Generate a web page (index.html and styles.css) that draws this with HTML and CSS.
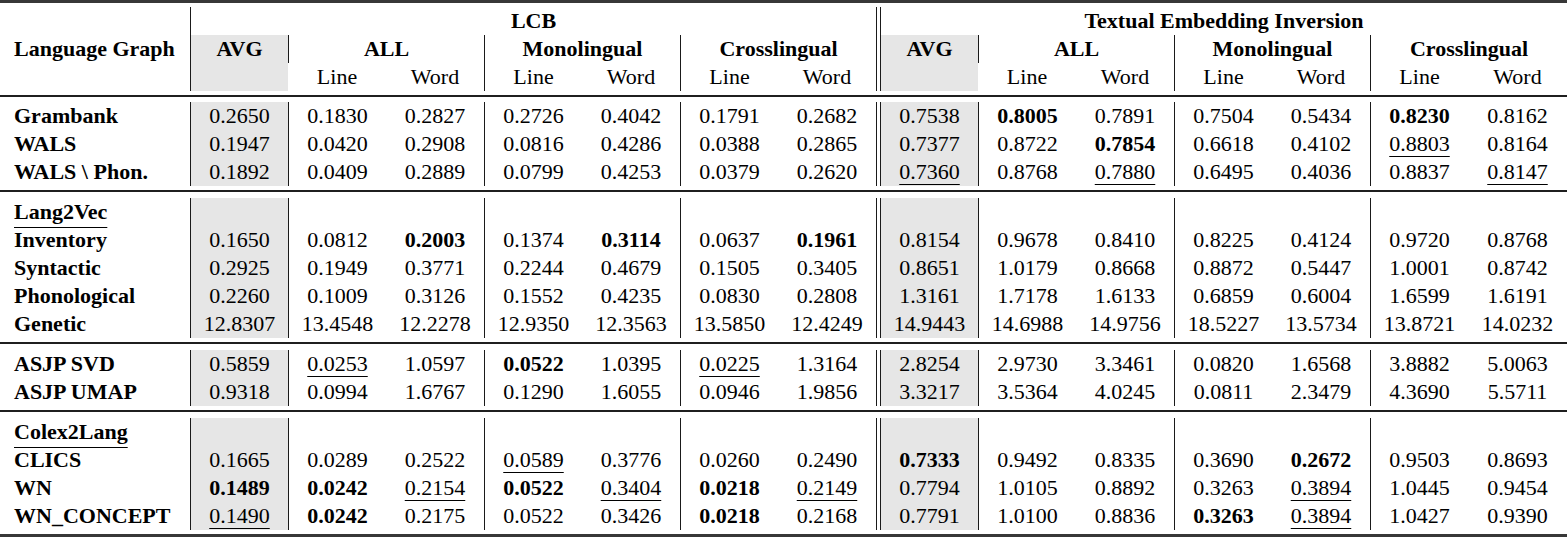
FILE: index.html
```html
<!DOCTYPE html>
<html lang="en">
<head>
<meta charset="utf-8">
<title>Language Graph results</title>
<link rel="stylesheet" href="styles.css">
</head>
<body>
<table class="results">
  <colgroup>
    <col class="c-label">
    <col class="c-num"><col class="c-num"><col class="c-num"><col class="c-num"><col class="c-num"><col class="c-num"><col class="c-num">
    <col class="c-gap">
    <col class="c-num"><col class="c-num"><col class="c-num"><col class="c-num"><col class="c-num"><col class="c-num"><col class="c-last">
  </colgroup>
  <thead>
    <tr class="toprule"><td colspan="16"></td></tr>
    <tr class="hrow">
      <th class="label corner" rowspan="3">Language Graph</th>
      <th class="v" colspan="7">LCB</th>
      <th class="v gap"></th>
      <th class="v" colspan="7">Textual Embedding Inversion</th>
    </tr>
    <tr class="hrow">
      <th class="v avg">AVG</th>
      <th class="v" colspan="2">ALL</th>
      <th class="v" colspan="2">Monolingual</th>
      <th class="v" colspan="2">Crosslingual</th>
      <th class="v gap"></th>
      <th class="v avg">AVG</th>
      <th class="v" colspan="2">ALL</th>
      <th class="v" colspan="2">Monolingual</th>
      <th class="v" colspan="2">Crosslingual</th>
    </tr>
    <tr class="hrow sub">
      <th class="v avg"></th>
      <th>Line</th><th>Word</th>
      <th class="v">Line</th><th>Word</th>
      <th class="v">Line</th><th>Word</th>
      <th class="v gap"></th>
      <th class="v avg"></th>
      <th>Line</th><th>Word</th>
      <th class="v">Line</th><th>Word</th>
      <th class="v">Line</th><th>Word</th>
    </tr>
    <tr class="midrule first"><td colspan="16"><div class="rule"></div></td></tr>
  </thead>
  <tbody>
    <tr>
      <td class="label">Grambank</td>
      <td class="v avg">0.2650</td><td class="v">0.1830</td><td>0.2827</td><td class="v">0.2726</td><td>0.4042</td><td class="v">0.1791</td><td>0.2682</td>
      <td class="v gap"></td>
      <td class="v avg">0.7538</td><td class="v b">0.8005</td><td>0.7891</td><td class="v">0.7504</td><td>0.5434</td><td class="v b">0.8230</td><td>0.8162</td>
    </tr>
    <tr>
      <td class="label">WALS</td>
      <td class="v avg">0.1947</td><td class="v">0.0420</td><td>0.2908</td><td class="v">0.0816</td><td>0.4286</td><td class="v">0.0388</td><td>0.2865</td>
      <td class="v gap"></td>
      <td class="v avg">0.7377</td><td class="v">0.8722</td><td class="b">0.7854</td><td class="v">0.6618</td><td>0.4102</td><td class="v"><span class="u">0.8803</span></td><td>0.8164</td>
    </tr>
    <tr>
      <td class="label">WALS \ Phon.</td>
      <td class="v avg">0.1892</td><td class="v">0.0409</td><td>0.2889</td><td class="v">0.0799</td><td>0.4253</td><td class="v">0.0379</td><td>0.2620</td>
      <td class="v gap"></td>
      <td class="v avg"><span class="u">0.7360</span></td><td class="v">0.8768</td><td><span class="u">0.7880</span></td><td class="v">0.6495</td><td>0.4036</td><td class="v">0.8837</td><td><span class="u">0.8147</span></td>
    </tr>
    <tr class="midrule"><td colspan="16"><div class="rule"></div></td></tr>
    <tr>
      <td class="label"><span class="u ul-label">Lang2Vec</span></td>
      <td class="v avg"></td><td class="v"></td><td></td><td class="v"></td><td></td><td class="v"></td><td></td>
      <td class="v gap"></td>
      <td class="v avg"></td><td class="v"></td><td></td><td class="v"></td><td></td><td class="v"></td><td></td>
    </tr>
    <tr>
      <td class="label">Inventory</td>
      <td class="v avg">0.1650</td><td class="v">0.0812</td><td class="b">0.2003</td><td class="v">0.1374</td><td class="b">0.3114</td><td class="v">0.0637</td><td class="b">0.1961</td>
      <td class="v gap"></td>
      <td class="v avg">0.8154</td><td class="v">0.9678</td><td>0.8410</td><td class="v">0.8225</td><td>0.4124</td><td class="v">0.9720</td><td>0.8768</td>
    </tr>
    <tr>
      <td class="label">Syntactic</td>
      <td class="v avg">0.2925</td><td class="v">0.1949</td><td>0.3771</td><td class="v">0.2244</td><td>0.4679</td><td class="v">0.1505</td><td>0.3405</td>
      <td class="v gap"></td>
      <td class="v avg">0.8651</td><td class="v">1.0179</td><td>0.8668</td><td class="v">0.8872</td><td>0.5447</td><td class="v">1.0001</td><td>0.8742</td>
    </tr>
    <tr>
      <td class="label">Phonological</td>
      <td class="v avg">0.2260</td><td class="v">0.1009</td><td>0.3126</td><td class="v">0.1552</td><td>0.4235</td><td class="v">0.0830</td><td>0.2808</td>
      <td class="v gap"></td>
      <td class="v avg">1.3161</td><td class="v">1.7178</td><td>1.6133</td><td class="v">0.6859</td><td>0.6004</td><td class="v">1.6599</td><td>1.6191</td>
    </tr>
    <tr>
      <td class="label">Genetic</td>
      <td class="v avg">12.8307</td><td class="v">13.4548</td><td>12.2278</td><td class="v">12.9350</td><td>12.3563</td><td class="v">13.5850</td><td>12.4249</td>
      <td class="v gap"></td>
      <td class="v avg">14.9443</td><td class="v">14.6988</td><td>14.9756</td><td class="v">18.5227</td><td>13.5734</td><td class="v">13.8721</td><td>14.0232</td>
    </tr>
    <tr class="midrule"><td colspan="16"><div class="rule"></div></td></tr>
    <tr>
      <td class="label">ASJP SVD</td>
      <td class="v avg">0.5859</td><td class="v"><span class="u">0.0253</span></td><td>1.0597</td><td class="v b">0.0522</td><td>1.0395</td><td class="v"><span class="u">0.0225</span></td><td>1.3164</td>
      <td class="v gap"></td>
      <td class="v avg">2.8254</td><td class="v">2.9730</td><td>3.3461</td><td class="v">0.0820</td><td>1.6568</td><td class="v">3.8882</td><td>5.0063</td>
    </tr>
    <tr>
      <td class="label">ASJP UMAP</td>
      <td class="v avg">0.9318</td><td class="v">0.0994</td><td>1.6767</td><td class="v">0.1290</td><td>1.6055</td><td class="v">0.0946</td><td>1.9856</td>
      <td class="v gap"></td>
      <td class="v avg">3.3217</td><td class="v">3.5364</td><td>4.0245</td><td class="v">0.0811</td><td>2.3479</td><td class="v">4.3690</td><td>5.5711</td>
    </tr>
    <tr class="midrule"><td colspan="16"><div class="rule"></div></td></tr>
    <tr>
      <td class="label"><span class="u ul-label">Colex2Lang</span></td>
      <td class="v avg"></td><td class="v"></td><td></td><td class="v"></td><td></td><td class="v"></td><td></td>
      <td class="v gap"></td>
      <td class="v avg"></td><td class="v"></td><td></td><td class="v"></td><td></td><td class="v"></td><td></td>
    </tr>
    <tr>
      <td class="label">CLICS</td>
      <td class="v avg">0.1665</td><td class="v">0.0289</td><td>0.2522</td><td class="v"><span class="u">0.0589</span></td><td>0.3776</td><td class="v">0.0260</td><td>0.2490</td>
      <td class="v gap"></td>
      <td class="v avg b">0.7333</td><td class="v">0.9492</td><td>0.8335</td><td class="v">0.3690</td><td class="b">0.2672</td><td class="v">0.9503</td><td>0.8693</td>
    </tr>
    <tr>
      <td class="label">WN</td>
      <td class="v avg b">0.1489</td><td class="v b">0.0242</td><td><span class="u">0.2154</span></td><td class="v b">0.0522</td><td><span class="u">0.3404</span></td><td class="v b">0.0218</td><td><span class="u">0.2149</span></td>
      <td class="v gap"></td>
      <td class="v avg">0.7794</td><td class="v">1.0105</td><td>0.8892</td><td class="v">0.3263</td><td><span class="u">0.3894</span></td><td class="v">1.0445</td><td>0.9454</td>
    </tr>
    <tr>
      <td class="label">WN_CONCEPT</td>
      <td class="v avg"><span class="u">0.1490</span></td><td class="v b">0.0242</td><td>0.2175</td><td class="v">0.0522</td><td>0.3426</td><td class="v b">0.0218</td><td>0.2168</td>
      <td class="v gap"></td>
      <td class="v avg">0.7791</td><td class="v">1.0100</td><td>0.8836</td><td class="v b">0.3263</td><td><span class="u">0.3894</span></td><td class="v">1.0427</td><td>0.9390</td>
    </tr>
    <tr class="bottomrule"><td colspan="16"></td></tr>
  </tbody>
</table>
</body>
</html>
```

FILE: styles.css
```css
html, body {
  margin: 0;
  padding: 0;
  background: #ffffff;
}

body {
  font-family: "Liberation Serif", "Times New Roman", serif;
  font-size: 22px;
  color: #000000;
}

.results {
  width: 1567px;
  table-layout: fixed;
  border-collapse: separate;
  border-spacing: 0;
}

.c-label { width: 190px; }
.c-num { width: 98px; }
.c-gap { width: 4px; }
.c-last { width: 99px; }

.results th,
.results td {
  padding: 0;
  height: 28px;
  line-height: 28px;
  text-align: center;
  vertical-align: middle;
  white-space: nowrap;
  font-weight: normal;
}

.results th {
  font-weight: bold;
}

.results .sub th {
  font-weight: normal;
}

.results .label {
  text-align: left;
  padding-left: 14px;
  font-weight: bold;
}

.results .corner {
  height: auto;
}

.results .v {
  border-left: 1px solid #1a1a1a;
}

.results .avg {
  background: #e6e6e6;
}

.results .b {
  font-weight: bold;
}

.u {
  text-decoration: underline;
  text-decoration-thickness: 1px;
  text-underline-offset: 5px;
  text-decoration-skip-ink: none;
}

.ul-label {
  text-underline-offset: 8px;
}

/* booktabs-style rules */
.results .toprule td,
.results .midrule td,
.results .bottomrule td {
  height: 0;
  line-height: 0;
  font-size: 0;
  padding: 0;
}

.results .toprule td {
  border-top: 3px solid #383838;
  padding-bottom: 4px;
}

.results .midrule td {
  padding: 4px 0 6px;
}

.results .midrule.first td {
  padding: 4px 0 5px;
}

.results .bottomrule td {
  padding-top: 4px;
  border-bottom: 3px solid #383838;
}

.rule {
  height: 2px;
  background: #1f1f1f;
}
```
